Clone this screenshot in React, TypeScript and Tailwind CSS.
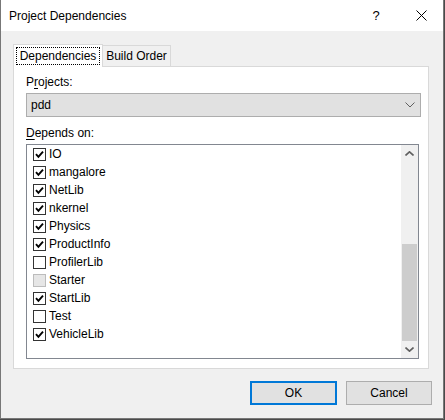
import React from "react";

const items = [
  { name: "IO", state: "on" },
  { name: "mangalore", state: "on" },
  { name: "NetLib", state: "on" },
  { name: "nkernel", state: "on" },
  { name: "Physics", state: "on" },
  { name: "ProductInfo", state: "on" },
  { name: "ProfilerLib", state: "off" },
  { name: "Starter", state: "disabled" },
  { name: "StartLib", state: "on" },
  { name: "Test", state: "off" },
  { name: "VehicleLib", state: "on" },
];

function CheckBox({ state }: { state: string }) {
  if (state === "disabled") {
    return <span className="block h-[13px] w-[13px] shrink-0 border border-[#bcbcbc] bg-[#e6e6e6]" />;
  }
  return (
    <span className="flex h-[13px] w-[13px] shrink-0 items-center justify-center border border-[#333333] bg-white">
      {state === "on" && (
        <svg width="9" height="9" viewBox="0 0 9 9">
          <path d="M1 4.2 L3.4 6.8 L8 1.6" fill="none" stroke="#000" strokeWidth="1.9" />
        </svg>
      )}
    </span>
  );
}

export default function App() {
  return (
    <div className="h-[420px] w-[445px] bg-[#4a4a4a] font-['Liberation_Sans',Arial,sans-serif] text-[12px] text-black">
      <div className="flex h-[419px] w-[444px] flex-col border border-t-0 border-[#777777] bg-[#f0f0f0]">
        {/* title bar */}
        <div className="flex h-[31px] items-center bg-white pl-2">
          <span className="flex-1 text-[12px]">Project Dependencies</span>
          <span className="w-[12px] text-center text-[13px]">?</span>
          <span className="ml-[33px] mr-[16px] flex h-[12px] w-[12px] items-center justify-center">
            <svg width="11" height="11" viewBox="0 0 11 11">
              <path d="M0.5 0.5 L10.5 10.5 M10.5 0.5 L0.5 10.5" stroke="#000" strokeWidth="1" />
            </svg>
          </span>
        </div>

        {/* tabs */}
        <div className="ml-[12px] mt-[13px] flex items-end">
          <div className="relative z-10 -mb-px flex h-[23px] w-[90px] items-center justify-center border border-b-0 border-[#d9d9d9] bg-white">
            <span className="flex h-[18px] w-[84px] items-center justify-center border border-dotted border-black">
              Dependencies
            </span>
          </div>
          <div className="flex h-[21px] w-[68px] items-center justify-center border border-l-0 border-b-0 border-[#d9d9d9] bg-[#f0f0f0]">
            Build Order
          </div>
        </div>

        {/* panel */}
        <div className="ml-[12px] flex h-[303px] w-[416px] flex-col border border-[#d9d9d9] bg-white pl-[12px] pt-[7px]">
          <div className="h-[16px] leading-[16px]">
            P<span className="underline underline-offset-2">r</span>ojects:
          </div>
          <div className="mt-[3px] flex h-[24px] w-[395px] items-center border border-[#adadad] bg-[#e1e1e1] pl-[4px] pr-[5px]">
            <span className="flex-1">pdd</span>
            <svg width="10" height="6" viewBox="0 0 10 6">
              <path d="M0.5 0.5 L5 5 L9.5 0.5" fill="none" stroke="#606060" strokeWidth="1" />
            </svg>
          </div>
          <div className="mt-[8px] h-[16px] leading-[16px]">
            <span className="underline underline-offset-2">D</span>epends on:
          </div>
          <div className="mt-[3px] flex h-[215px] w-[393px] border border-[#828790] bg-white">
            <div className="flex flex-1 flex-col pl-[6px]">
              {items.map((it) => (
                <div key={it.name} className="flex h-[18px] items-center gap-[3px]">
                  <CheckBox state={it.state} />
                  <span>{it.name}</span>
                </div>
              ))}
            </div>
            <div className="flex w-[17px] flex-col bg-[#f0f0f0]">
              <div className="flex h-[17px] items-center justify-center">
                <svg width="9" height="5" viewBox="0 0 9 5">
                  <path d="M0.5 4.5 L4.5 0.8 L8.5 4.5" fill="none" stroke="#606060" strokeWidth="1.6" />
                </svg>
              </div>
              <div className="flex-1" />
              <div className="mx-px h-[97px] bg-[#cdcdcd]" />
              <div className="flex h-[17px] items-center justify-center">
                <svg width="9" height="5" viewBox="0 0 9 5">
                  <path d="M0.5 0.5 L4.5 4.2 L8.5 0.5" fill="none" stroke="#606060" strokeWidth="1.6" />
                </svg>
              </div>
            </div>
          </div>
        </div>

        {/* buttons */}
        <div className="mr-[11px] mt-[12px] flex justify-end gap-[9px]">
          <button className="h-[24px] w-[87px] border-2 border-[#0078d7] bg-[#e1e1e1]">OK</button>
          <button className="h-[24px] w-[86px] border border-[#adadad] bg-[#e1e1e1]">Cancel</button>
        </div>
      </div>
    </div>
  );
}
